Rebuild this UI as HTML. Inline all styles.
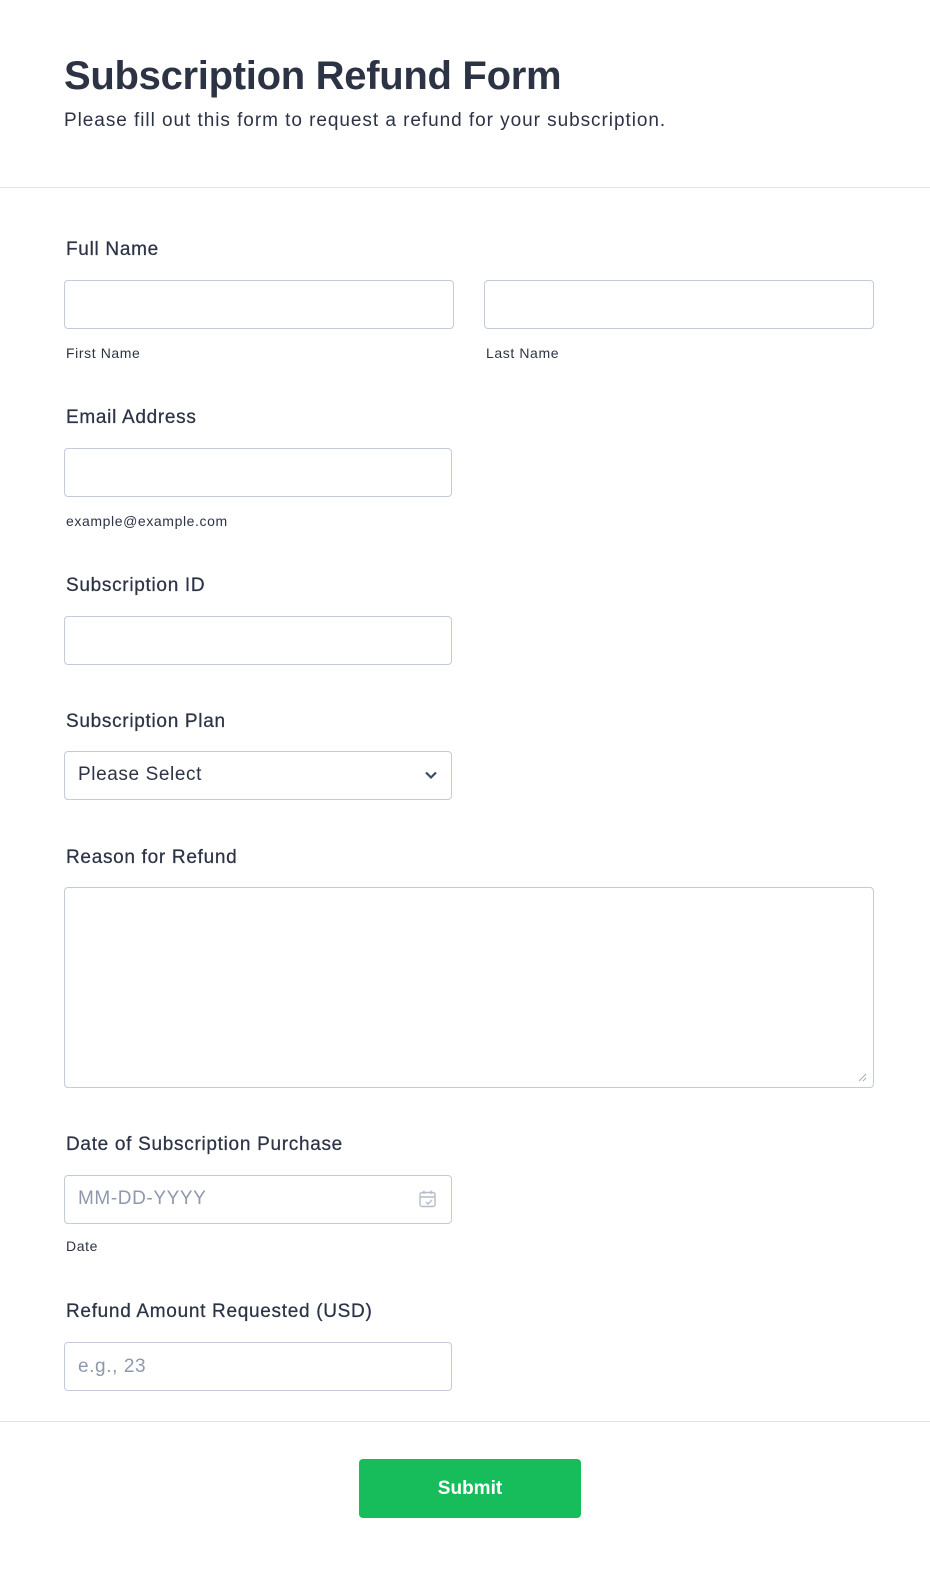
<!DOCTYPE html>
<html><head><meta charset="utf-8"><style>
*{box-sizing:border-box;margin:0;padding:0}
body{width:930px;height:1572px;background:#fff;font-family:"Liberation Sans",sans-serif;color:#2c3345;position:relative;overflow:hidden}
.a{position:absolute}
h1{position:absolute;left:64px;top:54px;font-size:40px;font-weight:bold;color:#2c3345;letter-spacing:-0.3px}
.sub{left:64px;top:110px;font-size:19px;letter-spacing:0.95px}
.hr{left:0;width:930px;height:1px;background:#e2e4ea}
.lbl{font-size:19px;left:66px;letter-spacing:0.7px;-webkit-text-stroke:0.25px #2c3345}
.small{font-size:14px;letter-spacing:0.6px}
.box{border:1px solid #c3cad8;border-radius:4px;background:#fff;height:49px}
.ph{font-size:19px;color:#8f99ad;left:78px;letter-spacing:0.6px}
</style></head><body>
<h1>Subscription Refund Form</h1>
<div class="a sub">Please fill out this form to request a refund for your subscription.</div>
<div class="a hr" style="top:187px"></div>

<div class="a lbl" style="top:239px">Full Name</div>
<div class="a box" style="left:64px;top:280px;width:390px"></div>
<div class="a box" style="left:484px;top:280px;width:390px"></div>
<div class="a small" style="left:66px;top:345px">First Name</div>
<div class="a small" style="left:486px;top:345px">Last Name</div>

<div class="a lbl" style="top:407px">Email Address</div>
<div class="a box" style="left:64px;top:448px;width:388px"></div>
<div class="a small" style="left:66px;top:513px">example@example.com</div>

<div class="a lbl" style="top:575px">Subscription ID</div>
<div class="a box" style="left:64px;top:616px;width:388px"></div>

<div class="a lbl" style="top:711px">Subscription Plan</div>
<div class="a box" style="left:64px;top:751px;width:388px"></div>
<div class="a" style="left:78px;top:764px;font-size:19px;letter-spacing:0.6px">Please Select</div>
<svg class="a" style="left:424px;top:770px" width="14" height="10" viewBox="0 0 14 10"><path d="M2 2.5L7 7.5L12 2.5" stroke="#3a4a66" stroke-width="2.2" fill="none"/></svg>

<div class="a lbl" style="top:847px">Reason for Refund</div>
<div class="a box" style="left:64px;top:887px;width:810px;height:201px"></div>
<svg class="a" style="left:857px;top:1072px" width="10" height="10"><path d="M2 9L9 2M6 9L9 6" stroke="#aab" stroke-width="1"/></svg>

<div class="a lbl" style="top:1134px">Date of Subscription Purchase</div>
<div class="a box" style="left:64px;top:1175px;width:388px"></div>
<div class="a ph" style="top:1188px">MM-DD-YYYY</div>
<svg class="a" style="left:418px;top:1189px" width="20" height="20" viewBox="0 0 20 20" fill="none" stroke="#b5bcc9" stroke-width="1.4"><rect x="2" y="3.5" width="15" height="14" rx="2"/><path d="M2 8H17M6 1.5V5M13 1.5V5M8 13L10 15L14 11"/></svg>
<div class="a small" style="left:66px;top:1238px">Date</div>

<div class="a lbl" style="top:1301px">Refund Amount Requested (USD)</div>
<div class="a box" style="left:64px;top:1342px;width:388px"></div>
<div class="a ph" style="top:1356px">e.g., 23</div>

<div class="a hr" style="top:1421px"></div>
<div class="a" style="left:359px;top:1459px;width:222px;height:59px;background:#18bd5b;border-radius:4px;color:#fff;font-size:19px;font-weight:bold;text-align:center;line-height:59px">Submit</div>
</body></html>
